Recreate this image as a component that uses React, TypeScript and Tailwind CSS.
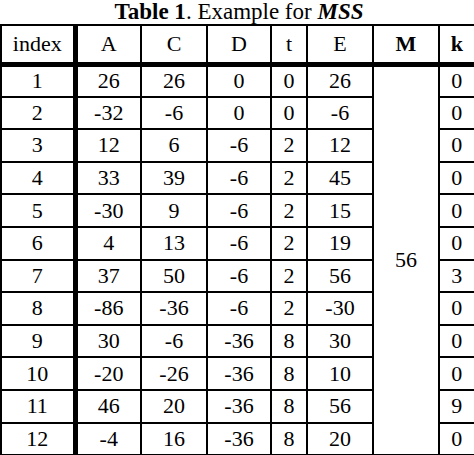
const ROWS: [string, string, string, string, string, string, string][] = [
  ["1", "26", "26", "0", "0", "26", "0"],
  ["2", "-32", "-6", "0", "0", "-6", "0"],
  ["3", "12", "6", "-6", "2", "12", "0"],
  ["4", "33", "39", "-6", "2", "45", "0"],
  ["5", "-30", "9", "-6", "2", "15", "0"],
  ["6", "4", "13", "-6", "2", "19", "0"],
  ["7", "37", "50", "-6", "2", "56", "3"],
  ["8", "-86", "-36", "-6", "2", "-30", "0"],
  ["9", "30", "-6", "-36", "8", "30", "0"],
  ["10", "-20", "-26", "-36", "8", "10", "0"],
  ["11", "46", "20", "-36", "8", "56", "9"],
  ["12", "-4", "16", "-36", "8", "20", "0"],
];

const HEAD = ["A", "C", "D", "t", "E"];

export default function App() {
  return (
    <div className="w-[474px] h-[455px] bg-white overflow-hidden font-['Liberation_Serif'] text-black">
      <h1 className="h-6 text-center text-[23px] leading-6 pl-1">
        <span className="font-bold">Table 1</span>. Example for{" "}
        <span className="font-bold italic">MSS</span>
      </h1>

      <table className="w-[474px] table-fixed border-collapse text-center text-[22px] leading-none">
        <colgroup>
          <col className="w-[74px]" />
          <col className="w-[66px]" />
          <col className="w-[66px]" />
          <col className="w-[64px]" />
          <col className="w-[36px]" />
          <col className="w-[66px]" />
          <col className="w-[66px]" />
          <col className="w-[36px]" />
        </colgroup>
        <thead>
          <tr className="h-[39px]">
            <th className="font-normal border-2 border-black border-r-[5px] border-r-double border-b-[5px] border-b-double">
              index
            </th>
            {HEAD.map((h) => (
              <th
                key={h}
                className="font-normal border-2 border-black border-b-[5px] border-b-double"
              >
                {h}
              </th>
            ))}
            <th className="font-bold border-2 border-black border-b-[5px] border-b-double">M</th>
            <th className="font-bold border-2 border-black border-r-[3px] border-r-[#333] border-b-[5px] border-b-double">
              k
            </th>
          </tr>
        </thead>
        <tbody>
          {ROWS.map(([idx, a, c, d, t, e, k], i) => (
            <tr key={idx} className="h-[32.6px]">
              <td className="border-2 border-black border-r-[5px] border-r-double">{idx}</td>
              <td className="border-2 border-black">{a}</td>
              <td className="border-2 border-black">{c}</td>
              <td className="border-2 border-black">{d}</td>
              <td className="border-2 border-black">{t}</td>
              <td className="border-2 border-black">{e}</td>
              {i === 0 && (
                <td rowSpan={12} className="border-2 border-black">
                  56
                </td>
              )}
              <td className="border-2 border-black border-r-[3px] border-r-[#333]">{k}</td>
            </tr>
          ))}
        </tbody>
      </table>
    </div>
  );
}
